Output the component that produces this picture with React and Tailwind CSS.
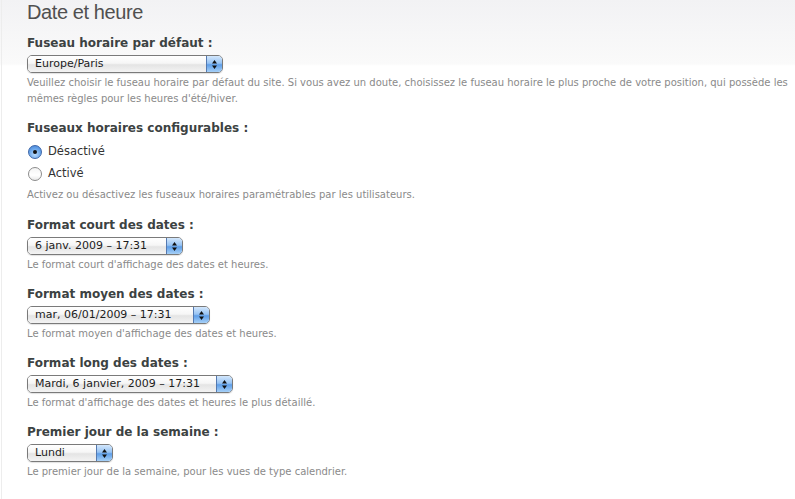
import React from 'react';

// Aqua-style popup select
const Select = ({ value, width }) => (
  <div
    className={`mt-[4px] flex h-[18px] ${width} rounded-[5px] border border-[#7a7a7a] shadow-[0_1px_1px_rgba(0,0,0,0.12)] overflow-hidden`}
  >
    <div className="flex-1 pl-[7px] text-[11px] leading-[16px] text-[#1c1c1c] whitespace-nowrap bg-[linear-gradient(to_bottom,#ffffff_0%,#f6f6f6_45%,#e4e4e4_55%,#f3f3f3_100%)]">
      {value}
    </div>
    <div className="w-[16px] flex items-center justify-center border-l border-[#5479b0] bg-[linear-gradient(to_bottom,#d3e7fc_0%,#97c3f3_45%,#5e9ee8_55%,#a6d0f7_100%)]">
      <svg width="7" height="11" viewBox="0 0 7 11">
        <path d="M3.5 1 L6 4.5 L1 4.5 Z" fill="#111" />
        <path d="M3.5 10 L6 6.5 L1 6.5 Z" fill="#111" />
      </svg>
    </div>
  </div>
);

const Radio = ({ checked, label }) => (
  <div className="flex items-center h-[22px]">
    {checked ? (
      <div className="w-[14px] h-[14px] ml-[1px] rounded-full border border-[#3d66a8] flex items-center justify-center bg-[radial-gradient(circle_at_50%_70%,#b9dcff_0%,#6aa6ea_55%,#3f7fd6_100%)]">
        <div className="w-[4px] h-[4px] rounded-full bg-[#111]" />
      </div>
    ) : (
      <div className="w-[14px] h-[14px] ml-[1px] rounded-full border border-[#8c8c8c] bg-[linear-gradient(to_bottom,#f4f4f4,#ffffff_60%,#e9e9e9)]" />
    )}
    <span className="ml-[6px] text-[11.5px] text-[#333]">{label}</span>
  </div>
);

const Label = ({ children }) => (
  <div className="text-[12px] leading-4 font-bold text-[#3c4242] whitespace-nowrap">{children}</div>
);

const Help = ({ children }) => (
  <div className="mt-[2px] text-[10px] leading-4 text-[#8a8a8a] whitespace-nowrap">{children}</div>
);

const formats = [
  { label: 'Format court des dates :', value: '6 janv. 2009 – 17:31', width: 'w-[156px]', help: "Le format court d'affichage des dates et heures." },
  { label: 'Format moyen des dates :', value: 'mar, 06/01/2009 – 17:31', width: 'w-[183px]', help: "Le format moyen d'affichage des dates et heures." },
  { label: 'Format long des dates :', value: 'Mardi, 6 janvier, 2009 – 17:31', width: 'w-[206px]', help: "Le format d'affichage des dates et heures le plus détaillé." },
  { label: 'Premier jour de la semaine :', value: 'Lundi', width: 'w-[86px]', help: 'Le premier jour de la semaine, pour les vues de type calendrier.' },
];

export default function App() {
  return (
    <div className="w-[795px] h-[499px] overflow-hidden bg-white bg-[linear-gradient(to_bottom,#f2f2f4_0px,#fafafa_64px,#ffffff_66px)] font-['DejaVu_Sans',sans-serif]">
      <div className="ml-[1px] h-full border-l border-[#ededed] pl-[25px]">
        <h1 className="text-[20px] leading-[24px] tracking-[-0.4px] text-[#505050] font-['Liberation_Sans',sans-serif]">
          Date et heure
        </h1>

        <div className="mt-[11px]">
          <Label>Fuseau horaire par défaut :</Label>
          <Select value="Europe/Paris" width="w-[196px]" />
          <Help>
            Veuillez choisir le fuseau horaire par défaut du site. Si vous avez un doute, choisissez le fuseau horaire le plus proche de votre position, qui possède les
            <br />
            mêmes règles pour les heures d'été/hiver.
          </Help>
        </div>

        <div className="mt-[13px] mb-[14px]">
          <Label>Fuseaux horaires configurables :</Label>
          <div className="mt-[5px]">
            <Radio checked label="Désactivé" />
            <Radio label="Activé" />
          </div>
          <Help>Activez ou désactivez les fuseaux horaires paramétrables par les utilisateurs.</Help>
        </div>

        <div className="flex flex-col gap-[13px]">
          {formats.map((f) => (
            <div key={f.label}>
              <Label>{f.label}</Label>
              <Select value={f.value} width={f.width} />
              <Help>{f.help}</Help>
            </div>
          ))}
        </div>
      </div>
    </div>
  );
}
